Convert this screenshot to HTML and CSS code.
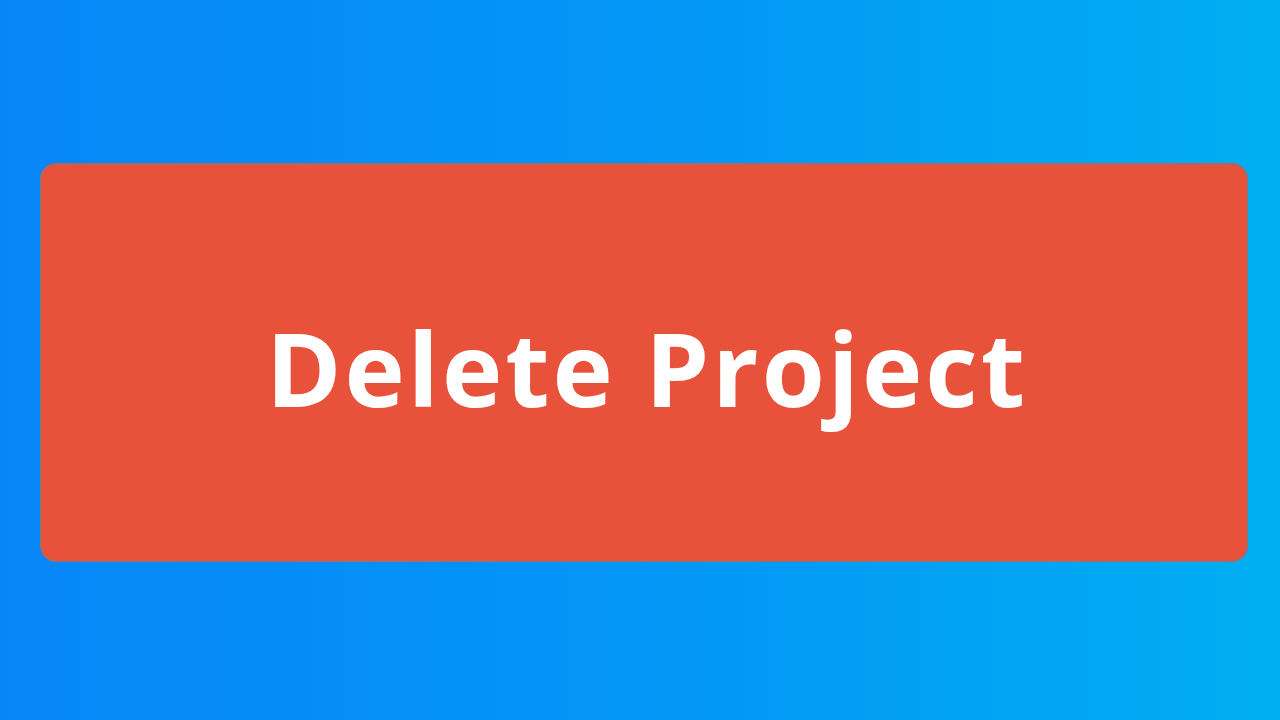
FILE: index.html
```html
<!DOCTYPE html>
<html lang="en">
<head>
  <meta charset="UTF-8" />
  <meta name="viewport" content="width=device-width, initial-scale=1.0"/>
  <title>Delete Project</title>
  <link rel="stylesheet" href="styles.css">
</head>
<body>

  <main class="stage">
    <!-- big danger button -->
    <button class="delete-btn" type="button">Delete Project</button>
  </main>

</body>
</html>
```

FILE: styles.css
```css
    html, body {
      margin: 0;
      padding: 0;
      height: 100%;
    }
    body {
      font-family: 'Open Sans', Lato, sans-serif;
      background: linear-gradient(90deg, #0786f8 0%, #0396f6 50%, #01aef2 100%);
      overflow: hidden;
    }
    .stage {
      height: 720px;
      box-sizing: border-box;
      padding: 163px 32px 0 40px;
    }
    .delete-btn {
      display: flex;
      align-items: center;
      justify-content: center;
      width: 100%;
      height: 399px;
      box-sizing: border-box;
      background-color: #e8513a;
      border: 2px solid rgba(130, 120, 130, 0.55);
      border-radius: 16px;
      color: white;
      font-family: 'Open Sans', sans-serif;
      font-weight: 700;
      font-size: 102px;
      letter-spacing: 3px;
      padding: 10px 0 0 6px;
      cursor: pointer;
    }
    .delete-btn:hover {
      background-color: #d9452f;
    }
```
